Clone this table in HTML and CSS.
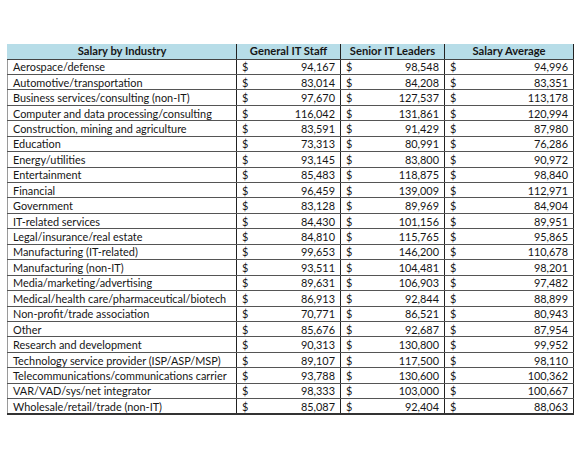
FILE: index.html
```html
<!DOCTYPE html>
<html>
<head>
<meta charset="utf-8">
<link rel="stylesheet" href="styles.css">
</head>
<body>
<table class="salary">
  <thead>
    <tr>
      <th class="c1">Salary by Industry</th>
      <th class="c2">General IT Staff</th>
      <th class="c3">Senior IT Leaders</th>
      <th class="c4">Salary Average</th>
    </tr>
  </thead>
  <tbody>
    <tr><td class="label">Aerospace/defense</td><td><div class="acct"><span>$</span><span>94,167</span></div></td><td><div class="acct"><span>$</span><span>98,548</span></div></td><td><div class="acct"><span>$</span><span>94,996</span></div></td></tr>
    <tr><td class="label">Automotive/transportation</td><td><div class="acct"><span>$</span><span>83,014</span></div></td><td><div class="acct"><span>$</span><span>84,208</span></div></td><td><div class="acct"><span>$</span><span>83,351</span></div></td></tr>
    <tr><td class="label">Business services/consulting (non-IT)</td><td><div class="acct"><span>$</span><span>97,670</span></div></td><td><div class="acct"><span>$</span><span>127,537</span></div></td><td><div class="acct"><span>$</span><span>113,178</span></div></td></tr>
    <tr><td class="label">Computer and data processing/consulting</td><td><div class="acct"><span>$</span><span>116,042</span></div></td><td><div class="acct"><span>$</span><span>131,861</span></div></td><td><div class="acct"><span>$</span><span>120,994</span></div></td></tr>
    <tr><td class="label">Construction, mining and agriculture</td><td><div class="acct"><span>$</span><span>83,591</span></div></td><td><div class="acct"><span>$</span><span>91,429</span></div></td><td><div class="acct"><span>$</span><span>87,980</span></div></td></tr>
    <tr><td class="label">Education</td><td><div class="acct"><span>$</span><span>73,313</span></div></td><td><div class="acct"><span>$</span><span>80,991</span></div></td><td><div class="acct"><span>$</span><span>76,286</span></div></td></tr>
    <tr><td class="label">Energy/utilities</td><td><div class="acct"><span>$</span><span>93,145</span></div></td><td><div class="acct"><span>$</span><span>83,800</span></div></td><td><div class="acct"><span>$</span><span>90,972</span></div></td></tr>
    <tr><td class="label">Entertainment</td><td><div class="acct"><span>$</span><span>85,483</span></div></td><td><div class="acct"><span>$</span><span>118,875</span></div></td><td><div class="acct"><span>$</span><span>98,840</span></div></td></tr>
    <tr><td class="label">Financial</td><td><div class="acct"><span>$</span><span>96,459</span></div></td><td><div class="acct"><span>$</span><span>139,009</span></div></td><td><div class="acct"><span>$</span><span>112,971</span></div></td></tr>
    <tr><td class="label">Government</td><td><div class="acct"><span>$</span><span>83,128</span></div></td><td><div class="acct"><span>$</span><span>89,969</span></div></td><td><div class="acct"><span>$</span><span>84,904</span></div></td></tr>
    <tr><td class="label">IT-related services</td><td><div class="acct"><span>$</span><span>84,430</span></div></td><td><div class="acct"><span>$</span><span>101,156</span></div></td><td><div class="acct"><span>$</span><span>89,951</span></div></td></tr>
    <tr><td class="label">Legal/insurance/real estate</td><td><div class="acct"><span>$</span><span>84,810</span></div></td><td><div class="acct"><span>$</span><span>115,765</span></div></td><td><div class="acct"><span>$</span><span>95,865</span></div></td></tr>
    <tr><td class="label">Manufacturing (IT-related)</td><td><div class="acct"><span>$</span><span>99,653</span></div></td><td><div class="acct"><span>$</span><span>146,200</span></div></td><td><div class="acct"><span>$</span><span>110,678</span></div></td></tr>
    <tr><td class="label">Manufacturing (non-IT)</td><td><div class="acct"><span>$</span><span>93,511</span></div></td><td><div class="acct"><span>$</span><span>104,481</span></div></td><td><div class="acct"><span>$</span><span>98,201</span></div></td></tr>
    <tr><td class="label">Media/marketing/advertising</td><td><div class="acct"><span>$</span><span>89,631</span></div></td><td><div class="acct"><span>$</span><span>106,903</span></div></td><td><div class="acct"><span>$</span><span>97,482</span></div></td></tr>
    <tr><td class="label">Medical/health care/pharmaceutical/biotech</td><td><div class="acct"><span>$</span><span>86,913</span></div></td><td><div class="acct"><span>$</span><span>92,844</span></div></td><td><div class="acct"><span>$</span><span>88,899</span></div></td></tr>
    <tr><td class="label">Non-profit/trade association</td><td><div class="acct"><span>$</span><span>70,771</span></div></td><td><div class="acct"><span>$</span><span>86,521</span></div></td><td><div class="acct"><span>$</span><span>80,943</span></div></td></tr>
    <tr><td class="label">Other</td><td><div class="acct"><span>$</span><span>85,676</span></div></td><td><div class="acct"><span>$</span><span>92,687</span></div></td><td><div class="acct"><span>$</span><span>87,954</span></div></td></tr>
    <tr><td class="label">Research and development</td><td><div class="acct"><span>$</span><span>90,313</span></div></td><td><div class="acct"><span>$</span><span>130,800</span></div></td><td><div class="acct"><span>$</span><span>99,952</span></div></td></tr>
    <tr><td class="label">Technology service provider (ISP/ASP/MSP)</td><td><div class="acct"><span>$</span><span>89,107</span></div></td><td><div class="acct"><span>$</span><span>117,500</span></div></td><td><div class="acct"><span>$</span><span>98,110</span></div></td></tr>
    <tr><td class="label">Telecommunications/communications carrier</td><td><div class="acct"><span>$</span><span>93,788</span></div></td><td><div class="acct"><span>$</span><span>130,600</span></div></td><td><div class="acct"><span>$</span><span>100,362</span></div></td></tr>
    <tr><td class="label">VAR/VAD/sys/net integrator</td><td><div class="acct"><span>$</span><span>98,333</span></div></td><td><div class="acct"><span>$</span><span>103,000</span></div></td><td><div class="acct"><span>$</span><span>100,667</span></div></td></tr>
    <tr><td class="label">Wholesale/retail/trade (non-IT)</td><td><div class="acct"><span>$</span><span>85,087</span></div></td><td><div class="acct"><span>$</span><span>92,404</span></div></td><td><div class="acct"><span>$</span><span>88,063</span></div></td></tr>
  </tbody>
</table>
</body>
</html>
```
FILE: styles.css
```css
html, body {
  margin: 0;
  padding: 0;
  background: #ffffff;
}
body {
  padding: 44px 0 0 7px;
  font-family: "Lato", "Liberation Sans", sans-serif;
  font-size: 10.9px;
  color: #161616;
}
.salary {
  border-collapse: collapse;
  table-layout: fixed;
  width: 566px;
}
.salary th, .salary td {
  padding: 0;
  white-space: nowrap;
  overflow: hidden;
  box-sizing: border-box;
}
.salary th {
  background: #b7dde8;
  height: 15px;
  font-size: 11.2px;
  font-weight: bold;
  text-align: center;
  border-bottom: 1px solid #444;
  border-right: 1.5px solid #222;
  line-height: 14px;
}
.salary th.c1 { width: 229px; border-left: 1px solid #b7dde8; }
.salary th.c2 { width: 104px; }
.salary th.c3 { width: 104px; }
.salary th.c4 { width: 129px; }
.salary td {
  height: 15.45px;
  line-height: 13px;
  border-bottom: 1px solid #555;
  border-right: 1.5px solid #222;
}
.salary td.label {
  padding-left: 5px;
  border-left: 1px solid #9a9a9a;
}
.salary tbody tr:last-child td {
  border-bottom: 2px solid #333;
}
.acct {
  display: flex;
  justify-content: space-between;
  padding: 0 5px 0 5px;
}
```
